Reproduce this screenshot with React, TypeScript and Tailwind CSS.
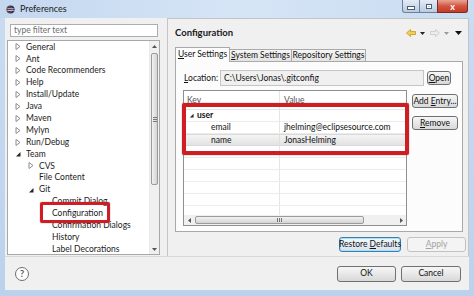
import React from "react";

type TreeNode = { label: string; level: number; arrow?: "closed" | "open" };

const treeItems: TreeNode[] = [
  { label: "General", level: 0, arrow: "closed" },
  { label: "Ant", level: 0, arrow: "closed" },
  { label: "Code Recommenders", level: 0, arrow: "closed" },
  { label: "Help", level: 0, arrow: "closed" },
  { label: "Install/Update", level: 0, arrow: "closed" },
  { label: "Java", level: 0, arrow: "closed" },
  { label: "Maven", level: 0, arrow: "closed" },
  { label: "Mylyn", level: 0, arrow: "closed" },
  { label: "Run/Debug", level: 0, arrow: "closed" },
  { label: "Team", level: 0, arrow: "open" },
  { label: "CVS", level: 1, arrow: "closed" },
  { label: "File Content", level: 1 },
  { label: "Git", level: 1, arrow: "open" },
  { label: "Commit Dialog", level: 2 },
  { label: "Configuration", level: 2 },
  { label: "Confirmation Dialogs", level: 2 },
  { label: "History", level: 2 },
  { label: "Label Decorations", level: 2 },
];

const indent = ["pl-[4px]", "pl-[17px]", "pl-[30px]"];

const Arrow = ({ kind }: { kind?: "closed" | "open" }) => {
  if (kind === "closed")
    return (
      <svg width="6" height="7" viewBox="0 0 6 7">
        <polygon points="1,0.5 5,3.5 1,6.5" fill="#fff" stroke="#8c8c8c" strokeWidth="1" />
      </svg>
    );
  if (kind === "open")
    return (
      <svg width="6" height="6" viewBox="0 0 6 6">
        <polygon points="5.5,1 5.5,5.5 1,5.5" fill="#262626" />
      </svg>
    );
  return null;
};

const btn =
  "flex items-center justify-center whitespace-nowrap rounded-[3px] border border-[#707070] bg-gradient-to-b from-[#f6f6f6] via-[#e8e8e8] to-[#d8d8d8] text-[8.5px] text-[#111]";

const VScroll = () => (
  <div className="flex h-full w-[10px] flex-col border-l border-[#eaeaea] bg-[#f0f0f0]">
    <div className="flex h-[10px] items-center justify-center">
      <svg width="5" height="3" viewBox="0 0 5 3">
        <polygon points="0,3 2.5,0 5,3" fill="#555" />
      </svg>
    </div>
    <div className="mx-[1px] mt-[2px] flex h-[132px] items-center justify-center rounded-[2px] border border-[#9a9a9a] bg-gradient-to-r from-[#f2f2f2] to-[#d4d4d4]">
      <div className="flex flex-col gap-[1px]">
        <div className="h-px w-[4px] bg-[#777]" />
        <div className="h-px w-[4px] bg-[#777]" />
        <div className="h-px w-[4px] bg-[#777]" />
      </div>
    </div>
    <div className="flex-1" />
    <div className="flex h-[10px] items-center justify-center">
      <svg width="5" height="3" viewBox="0 0 5 3">
        <polygon points="0,0 2.5,3 5,0" fill="#555" />
      </svg>
    </div>
  </div>
);

export default function App() {
  return (
    <div className="relative h-[296px] w-[474px] overflow-hidden bg-gradient-to-b from-[#c9dcf2] to-[#bcd2ec] font-['Lato',sans-serif] text-[#111]">
      {/* title bar */}
      <div className="flex h-[18px] items-center bg-gradient-to-r from-[#c3d7ef] via-[#d6e5f6] to-[#c9dcf1]">
        <svg width="9" height="9" viewBox="0 0 10 10" className="ml-[6px]">
          <circle cx="5" cy="5" r="4.5" fill="#2f2a5e" />
          <rect x="1.5" y="3.8" width="7" height="0.8" fill="#fff" />
          <rect x="1.5" y="5.6" width="7" height="0.8" fill="#fff" />
          <circle cx="3.6" cy="5" r="3.2" fill="none" stroke="#f7941e" strokeWidth="0.6" opacity="0.7" />
        </svg>
        <span className="ml-[5px] text-[9px] text-[#1a1a1a]">Preferences</span>
      </div>
      <div className="absolute right-[6px] top-0 flex h-[13px]">
        <div className="flex w-[18px] items-center justify-center rounded-bl-[3px] border border-t-0 border-[#6f7f97] bg-gradient-to-b from-[#e4ecf6] to-[#b9cbe2]">
          <div className="mt-[4px] h-[2px] w-[6px] bg-white shadow-[0_0_0_1px_#4d5b71]" />
        </div>
        <div className="flex w-[17px] items-center justify-center border-b border-[#6f7f97] bg-gradient-to-b from-[#e4ecf6] to-[#b9cbe2]">
          <div className="h-[5px] w-[6px] border border-[#4d5b71] bg-white p-[1px]">
            <div className="h-full w-full bg-[#b9cbe2]" />
          </div>
        </div>
        <div className="flex w-[31px] items-center justify-center rounded-br-[3px] border border-t-0 border-[#7d2a22] bg-gradient-to-b from-[#e7a597] via-[#d2553f] to-[#c43a26]">
          <span className="text-[9px] font-bold leading-none text-white">x</span>
        </div>
      </div>

      {/* body */}
      <div className="mx-[5px] flex h-[272px] flex-col bg-[#f0f0f0]">
        <div className="flex h-[239px] border-b border-[#d8d8d8]">
          {/* left pane */}
          <div className="flex w-[155px] flex-col pl-[2px] pt-[6px]">
            <div className="ml-[3px] flex h-[13px] w-[148px] items-center border border-[#abadb3] bg-white pl-[3px] text-[8.5px] text-[#6d6d6d]">
              type filter text
            </div>
            <div className="relative mt-[3px] flex h-[215px] w-[153px] border border-[#a8a8a8] bg-white">
              <div className="flex-1 overflow-hidden">
                {treeItems.map((n) => (
                  <div key={n.label} className={`flex h-[11.9px] items-center ${indent[n.level]}`}>
                    <div className="flex w-[12px] items-center justify-center">
                      <Arrow kind={n.arrow} />
                    </div>
                    <span className="ml-[2px] whitespace-nowrap text-[8.5px] leading-none text-[#1b1b1b]">{n.label}</span>
                  </div>
                ))}
              </div>
              <VScroll />
              <div className="absolute left-[32px] top-[161px] h-[21px] w-[70px] rounded-[2px] border-[3px] border-[#cf1d24] shadow-[0_0_1px_#8a1010]" />
            </div>
          </div>

          {/* right pane */}
          <div className="ml-[7px] flex w-[302px] flex-col border-l border-r border-t border-[#c4c4c4]">
            <div className="flex h-[28px] items-center pl-[7px] pr-[6px]">
              <span className="text-[9.5px] font-bold text-[#1a1a1a]">Configuration</span>
              <div className="ml-auto flex items-center">
                <svg width="10" height="8" viewBox="0 0 10 8">
                  <path d="M0.5 4 L4.5 0.5 L4.5 2.5 L9.5 2.5 L9.5 5.5 L4.5 5.5 L4.5 7.5 Z" fill="#f4cf52" stroke="#c99520" strokeWidth="0.8" />
                </svg>
                <svg width="5" height="3" viewBox="0 0 5 3" className="ml-[4px]">
                  <polygon points="0,0 5,0 2.5,3" fill="#222" />
                </svg>
                <svg width="10" height="8" viewBox="0 0 10 8" className="ml-[5px]">
                  <path d="M9.5 4 L5.5 0.5 L5.5 2.5 L0.5 2.5 L0.5 5.5 L5.5 5.5 L5.5 7.5 Z" fill="#ececec" stroke="#c8c8c8" strokeWidth="0.8" />
                </svg>
                <svg width="5" height="3" viewBox="0 0 5 3" className="ml-[4px]">
                  <polygon points="0,0 5,0 2.5,3" fill="#9a9a9a" />
                </svg>
                <svg width="7" height="4" viewBox="0 0 7 4" className="ml-[6px]">
                  <polygon points="0,0 7,0 3.5,4" fill="#111" />
                </svg>
              </div>
            </div>

            {/* tabs */}
            <div className="ml-[7px] flex h-[14px] items-end whitespace-nowrap text-[8.5px]">
              <div className="relative z-10 -mb-px flex h-[15px] w-[55px] items-center justify-center border border-b-0 border-[#a9a9a9] bg-[#fcfcfc] pb-[1px]">
                <span><span className="underline">U</span>ser Settings</span>
              </div>
              <div className="flex h-[12px] w-[62px] items-center justify-center border border-b-0 border-l-0 border-[#a9a9a9] bg-gradient-to-b from-[#f5f5f5] to-[#e4e4e4]">
                <span><span className="underline">S</span>ystem Settings</span>
              </div>
              <div className="flex h-[12px] w-[74px] items-center justify-center border border-b-0 border-l-0 border-[#a9a9a9] bg-gradient-to-b from-[#f5f5f5] to-[#e4e4e4]">
                <span>Repository Set<span className="underline">t</span>ings</span>
              </div>
            </div>

            {/* tab panel */}
            <div className="relative ml-[7px] h-[171px] w-[288px] border border-[#a9a9a9] bg-[#fcfcfc] pl-[8px] pt-[8px]">
              <div className="flex h-[16px] items-center whitespace-nowrap text-[8.5px]">
                <span className="w-[36px]"><span className="underline">L</span>ocation:</span>
                <div className="flex h-[16px] w-[204px] items-center border border-[#c5c5c5] bg-[#f0f0f0] pl-[3px]">
                  C:\Users\Jonas\.gitconfig
                </div>
                <div className={`${btn} ml-[3px] h-[14px] w-[24px]`}>
                  <span><span className="underline">O</span>pen</span>
                </div>
              </div>

              <div className="mt-[4px] flex">
                <div className="-ml-px flex h-[136px] w-[224px] flex-col whitespace-nowrap border border-[#8e8f8f] bg-white text-[8.5px]">
                  <div className="flex h-[19px] border-b border-[#e5e5e5] text-[#555]">
                    <div className="flex w-[96px] items-center border-r border-[#e5e5e5] pl-[3px]">Key</div>
                    <div className="flex items-center pl-[4px]">Value</div>
                  </div>
                  <div className="flex-1 overflow-hidden">
                    <div className="flex h-[12px] border-b border-[#ececec]">
                      <div className="flex w-[96px] items-center border-r border-[#e5e5e5] pl-[5px]">
                        <svg width="5" height="5" viewBox="0 0 6 6">
                          <polygon points="5.5,1 5.5,5.5 1,5.5" fill="#262626" />
                        </svg>
                        <span className="ml-[3px] font-bold">user</span>
                      </div>
                    </div>
                    <div className="flex h-[12px] border-b border-[#ececec]">
                      <div className="flex w-[96px] items-center border-r border-[#e5e5e5] pl-[27px]">email</div>
                      <div className="flex items-center pl-[4px]">jhelming@eclipsesource.com</div>
                    </div>
                    <div className="flex h-[12px] border-y border-[#d9d9d9] bg-gradient-to-b from-[#f4f4f4] to-[#e2e2e2]">
                      <div className="flex w-[96px] items-center border-r border-[#e0e0e0] pl-[27px]">name</div>
                      <div className="flex items-center pl-[4px]">JonasHelming</div>
                    </div>
                    {[0, 1, 2, 3, 4, 5].map((i) => (
                      <div key={i} className="flex h-[12px] border-b border-[#ececec]">
                        <div className="w-[96px] border-r border-[#e5e5e5]" />
                      </div>
                    ))}
                  </div>
                  <div className="flex h-[10px] bg-[#f0f0f0]">
                    <div className="flex w-[10px] items-center justify-center">
                      <svg width="3" height="5" viewBox="0 0 3 5">
                        <polygon points="3,0 0,2.5 3,5" fill="#555" />
                      </svg>
                    </div>
                    <div className="my-[1px] ml-[1px] flex w-[169px] items-center justify-center rounded-[2px] border border-[#9a9a9a] bg-gradient-to-b from-[#f2f2f2] to-[#d4d4d4]">
                      <div className="flex gap-[1px]">
                        <div className="h-[4px] w-px bg-[#777]" />
                        <div className="h-[4px] w-px bg-[#777]" />
                        <div className="h-[4px] w-px bg-[#777]" />
                      </div>
                    </div>
                    <div className="flex-1" />
                    <div className="flex w-[10px] items-center justify-center">
                      <svg width="3" height="5" viewBox="0 0 3 5">
                        <polygon points="0,0 3,2.5 0,5" fill="#555" />
                      </svg>
                    </div>
                  </div>
                </div>
                <div className="ml-[5px] flex flex-col">
                  <div className={`${btn} mt-[4px] h-[14px] w-[46px]`}>
                    <span>Add <span className="underline">E</span>ntry...</span>
                  </div>
                  <div className={`${btn} mt-[8px] h-[14px] w-[46px]`}>
                    <span><span className="underline">R</span>emove</span>
                  </div>
                </div>
              </div>

              <div className="absolute left-[6px] top-[41px] h-[52px] w-[227px] rounded-[2px] border-[4px] border-[#cf1d24] shadow-[0_0_1px_#8a1010]" />
            </div>

            <div className="mt-[5px] flex justify-end gap-[6px] whitespace-nowrap pr-[2px]">
              <div className="flex h-[15px] w-[62px] items-center justify-center rounded-[3px] border border-[#3c7fb1] bg-gradient-to-b from-[#f4f8fb] via-[#e6eef5] to-[#d7e2ea] text-[8.5px] shadow-[inset_0_0_0_1px_#a9dcf6]">
                <span>Restore <span className="underline">D</span>efaults</span>
              </div>
              <div className="flex h-[15px] w-[59px] items-center justify-center rounded-[3px] border border-[#bfc3c6] bg-[#f4f4f4] text-[8.5px] text-[#a3a3a3]">
                <span><span className="underline">A</span>pply</span>
              </div>
            </div>
          </div>
        </div>

        {/* button bar */}
        <div className="flex flex-1 items-center pr-[8px]">
          <div className="ml-[10px] flex h-[14px] w-[14px] items-center justify-center rounded-full border-[1.5px] border-[#6e6e6e] bg-white text-[9px] font-bold text-[#555]">
            ?
          </div>
          <div className={`${btn} ml-auto h-[16px] w-[59px]`}>OK</div>
          <div className={`${btn} ml-[5px] h-[16px] w-[60px]`}>Cancel</div>
        </div>
      </div>
    </div>
  );
}
